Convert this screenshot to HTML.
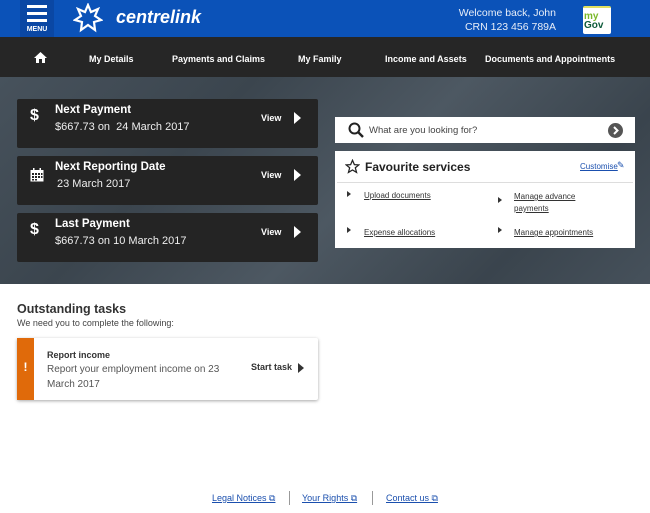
<!DOCTYPE html>
<html><head><style>
*{margin:0;padding:0;box-sizing:border-box}
body{width:650px;height:513px;background:#fff;font-family:"Liberation Sans",sans-serif;position:relative;overflow:hidden}
.a{position:absolute}
.hdr{left:0;top:0;width:650px;height:37px;background:#0b52b8}
.menu{left:20px;top:0;width:34px;height:37px;background:#0a47a4;color:#fff;font-size:7px;font-weight:bold;text-align:center}
.menu i{display:block;width:20px;height:3px;background:#fff;margin:4px auto 0}
.nav{left:0;top:37px;width:650px;height:40px;background:#262626;color:#fff;font-size:9px;font-weight:bold}
.nav span{position:absolute;top:17px}
.hero{left:0;top:77px;width:650px;height:207px;background:linear-gradient(135deg,#47525c 0%,#3b454e 30%,#4d5862 55%,#3a444d 80%,#46515b 100%)}
.card{left:17px;width:301px;height:49px;background:#242424;border-radius:2px;color:#fff}
.card b{position:absolute;left:38px;top:5px;font-size:11.5px}
.card .s{position:absolute;left:38px;top:22px;font-size:11px;color:#eee}
.card .v{position:absolute;left:244px;top:14px;font-size:9px;font-weight:bold}
.card .tri{position:absolute;left:277px;top:13px;width:0;height:0;border-left:7px solid #fff;border-top:6px solid transparent;border-bottom:6px solid transparent}
.card .ic{position:absolute;left:13px;top:8px;font-size:16px;font-weight:bold}
.lnk{font-size:8px;color:#333;text-decoration:underline;position:absolute}
.tr{position:absolute;width:0;height:0;border-left:4px solid #333;border-top:3.5px solid transparent;border-bottom:3.5px solid transparent}
.foot a{position:absolute;top:493px;font-size:9px;color:#1a4fae;text-decoration:underline}
</style></head><body>
<div class="a hdr"></div>
<div class="a menu"><i style="margin-top:5px"></i><i></i><i></i><div style="margin-top:4px">MENU</div></div>
<svg class="a" style="left:73px;top:3px" width="30" height="30" viewBox="0 0 30 30"><path d="M15 2 L18 9 L25 6 L22 13 L28 17 L21 19 L22 27 L15 22 L8 27 L9 19 L2 17 L8 13 L5 6 L12 9 Z" fill="none" stroke="#fff" stroke-width="2.2"/></svg>
<div class="a" style="left:116px;top:7px;color:#fff;font-size:18px;font-weight:bold;font-style:italic">centrelink</div>
<div class="a" style="left:440px;top:6px;width:116px;text-align:right;color:#e8eef8;font-size:10.5px;line-height:14px">Welcome back, John<br>CRN 123 456 789A</div>
<div class="a" style="left:583px;top:6px;width:28px;height:28px;background:#fff;border-radius:2px;border-top:2px solid #e0e060;font-size:10px;font-weight:bold;line-height:9px;padding-top:4px;padding-left:1px"><span style="color:#7ab82a">my</span><br><span style="color:#0d5a3a">Gov</span></div>
<div class="a nav">
<svg style="position:absolute;left:34px;top:15px" width="13" height="11" viewBox="0 0 13 11"><path d="M6.5 0 L13 6 L11 6 L11 11 L8 11 L8 7 L5 7 L5 11 L2 11 L2 6 L0 6 Z" fill="#fff"/></svg>
<span style="left:89px">My Details</span><span style="left:172px">Payments and Claims</span><span style="left:298px">My Family</span><span style="left:385px">Income and Assets</span><span style="left:485px">Documents and Appointments</span></div>
<div class="a hero"></div>
<div class="a card" style="top:99px"><span class="ic">$</span><b>Next Payment</b><span class="s">$667.73 on&nbsp; 24 March 2017</span><span class="v">View</span><i class="tri"></i></div>
<div class="a card" style="top:156px"><svg style="position:absolute;left:13px;top:12px" width="14" height="14" viewBox="0 0 14 14"><rect x="0.5" y="2" width="13" height="11.5" fill="#fff"/><g fill="#242424"><rect x="2" y="5" width="2" height="2"/><rect x="5" y="5" width="2" height="2"/><rect x="8" y="5" width="2" height="2"/><rect x="11" y="5" width="1.5" height="2"/><rect x="2" y="8" width="2" height="2"/><rect x="5" y="8" width="2" height="2"/><rect x="8" y="8" width="2" height="2"/><rect x="11" y="8" width="1.5" height="2"/><rect x="2" y="11" width="2" height="1.5"/><rect x="5" y="11" width="2" height="1.5"/></g><rect x="3" y="0" width="1.5" height="3" fill="#fff"/><rect x="9.5" y="0" width="1.5" height="3" fill="#fff"/></svg><b>Next Reporting Date</b><span class="s" style="left:40px">23 March 2017</span><span class="v">View</span><i class="tri"></i></div>
<div class="a card" style="top:213px"><span class="ic">$</span><b>Last Payment</b><span class="s">$667.73 on 10 March 2017</span><span class="v">View</span><i class="tri"></i></div>
<div class="a" style="left:335px;top:117px;width:300px;height:26px;background:#fff">
<svg style="position:absolute;left:13px;top:5px" width="16" height="16" viewBox="0 0 16 16"><circle cx="6.5" cy="6.5" r="5" fill="none" stroke="#222" stroke-width="2"/><path d="M10 10 L15 15" stroke="#222" stroke-width="2.4"/></svg>
<span style="position:absolute;left:34px;top:8px;font-size:9.5px;color:#444">What are you looking for?</span>
<svg style="position:absolute;left:273px;top:6px" width="15" height="15" viewBox="0 0 15 15"><circle cx="7.5" cy="7.5" r="7.5" fill="#555"/><path d="M6 4 L9.5 7.5 L6 11" fill="none" stroke="#fff" stroke-width="2"/></svg></div>
<div class="a" style="left:335px;top:151px;width:300px;height:97px;background:#fff">
<svg style="position:absolute;left:10px;top:8px" width="15" height="15" viewBox="0 0 24 24"><path d="M12 2 L15 9 L22 9.5 L16.5 14 L18.5 21.5 L12 17.5 L5.5 21.5 L7.5 14 L2 9.5 L9 9 Z" fill="none" stroke="#222" stroke-width="2"/></svg>
<span style="position:absolute;left:30px;top:9px;font-size:12px;font-weight:bold;color:#222">Favourite services</span>
<span style="position:absolute;left:245px;top:11px;font-size:8px;color:#1a4fae;text-decoration:underline">Customise</span><span style="position:absolute;left:282px;top:9px;font-size:9px;color:#1a4fae">✎</span>
<div style="position:absolute;left:2px;top:31px;width:296px;height:1px;background:#ddd"></div>
<i class="tr" style="left:12px;top:40px"></i><span class="lnk" style="left:29px;top:40px">Upload documents</span>
<i class="tr" style="left:163px;top:46px"></i><span class="lnk" style="left:179px;top:40px;line-height:12px">Manage advance<br>payments</span>
<i class="tr" style="left:12px;top:76px"></i><span class="lnk" style="left:29px;top:77px">Expense allocations</span>
<i class="tr" style="left:163px;top:76px"></i><span class="lnk" style="left:179px;top:77px">Manage appointments</span></div>
<div class="a" style="left:17px;top:302px;font-size:12.5px;font-weight:bold;color:#333">Outstanding tasks</div>
<div class="a" style="left:17px;top:318px;font-size:9px;color:#444">We need you to complete the following:</div>
<div class="a" style="left:17px;top:338px;width:301px;height:62px;background:#fff;box-shadow:0 1px 3px rgba(0,0,0,.35);border-radius:2px">
<div style="position:absolute;left:0;top:0;width:17px;height:62px;background:#e06a0a;color:#fff;font-weight:bold;font-size:12px;text-align:center;padding-top:22px">!</div>
<div style="position:absolute;left:30px;top:12px;font-size:9px;font-weight:bold;color:#333">Report income</div>
<div style="position:absolute;left:30px;top:24px;width:180px;font-size:10px;color:#555;line-height:15px">Report your employment income on 23 March 2017</div>
<div style="position:absolute;left:234px;top:24px;font-size:9px;font-weight:bold;color:#333">Start task</div>
<i class="tr" style="left:281px;top:25px;border-left-width:6px;border-top-width:5px;border-bottom-width:5px"></i></div>
<div class="foot"><a style="left:212px">Legal Notices ⧉</a><a style="left:302px">Your Rights ⧉</a><a style="left:386px">Contact us ⧉</a></div>
<div class="a" style="left:289px;top:491px;width:1px;height:14px;background:#999"></div>
<div class="a" style="left:372px;top:491px;width:1px;height:14px;background:#999"></div>
</body></html>
